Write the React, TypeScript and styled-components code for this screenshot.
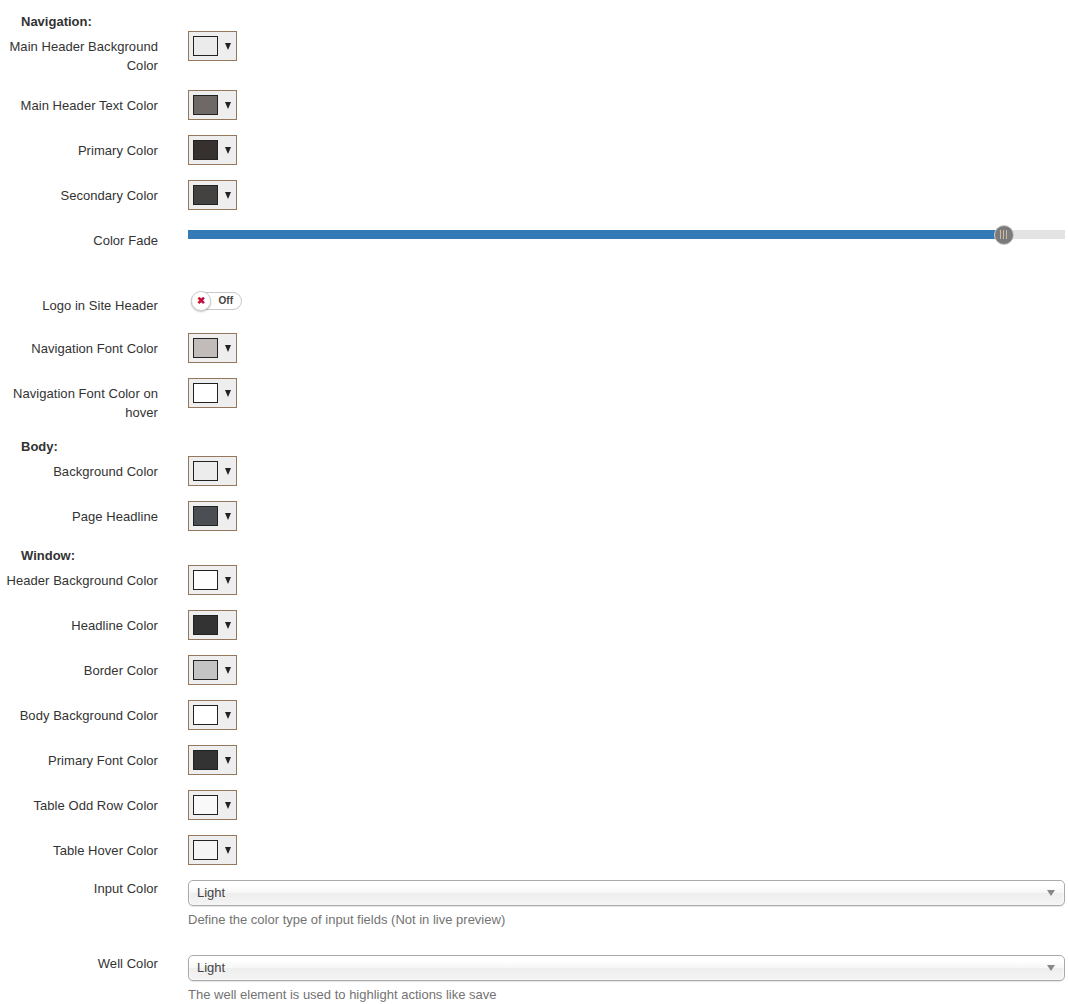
import React from "react";
import styled, { createGlobalStyle } from "styled-components";

const GlobalStyle = createGlobalStyle`
  body {
    margin: 0;
    background: #fff;
    font-family: "Liberation Sans", Arial, sans-serif;
    font-size: 13px;
    line-height: 1.428571;
    color: #333;
  }
`;

const Form = styled.div`
  padding: 12px 3px 0 0;
  width: 1065px;
`;

const SectionTitle = styled.div`
  padding: 1px 0 0 21px;
  font-weight: bold;
  height: 18px;
`;

const Row = styled.div`
  display: grid;
  grid-template-columns: 158px 1fr;
  column-gap: 30px;
  margin-bottom: 15px;
`;

const Label = styled.label<{ $top?: number }>`
  text-align: right;
  letter-spacing: 0.05px;
  padding-top: ${(p) => (p.$top ?? 7)}px;
`;

const PickerButton = styled.div`
  border: 1px solid #95785c;
  background: #eee;
  display: flex;
  align-items: flex-start;
  padding: 4px 0 0 4px;
  box-sizing: content-box;
  width: 43px;
  height: 24px;
`;

const Swatch = styled.span<{ $color: string }>`
  width: 23px;
  height: 18px;
  border: 1px solid #222;
  background: ${(p) => p.$color};
`;

const Caret = styled.span`
  margin-left: 7px;
  margin-top: 7px;
  width: 0;
  height: 0;
  border-left: 3.5px solid transparent;
  border-right: 3.5px solid transparent;
  border-top: 7px solid #222;
`;

const ColorPicker = ({ color }: { color: string }) => (
  <PickerButton>
    <Swatch $color={color} />
    <Caret />
  </PickerButton>
);

const SliderWrap = styled.div`
  height: 50px;
  padding-top: 5px;
  box-sizing: border-box;
`;

const Track = styled.div`
  position: relative;
  height: 9px;
  background: #e3e3e3;
`;

const Fill = styled.div`
  height: 100%;
  background: #337ab7;
`;

const Handle = styled.div`
  position: absolute;
  top: 50%;
  width: 18px;
  height: 18px;
  margin: -10px 0 0 -10px;
  border-radius: 50%;
  background: #7b7b7b;
  border: 1px solid #cfcfcf;
  display: flex;
  align-items: center;
  justify-content: center;
  gap: 2px;
  span {
    width: 1px;
    height: 9px;
    background: #c9b9a6;
  }
`;

const Slider = ({ value }: { value: number }) => (
  <SliderWrap>
    <Track>
      <Fill style={{ width: `${value}%` }} />
      <Handle style={{ left: `${value}%` }}>
        <span />
        <span />
        <span />
      </Handle>
    </Track>
  </SliderWrap>
);

const ToggleWrap = styled.div`
  margin: 2px 0 8px 3px;
  width: 51px;
  height: 18px;
  border: 1px solid #c8c8c8;
  border-radius: 9px;
  background: #fff;
  position: relative;
  display: flex;
  align-items: center;
  justify-content: flex-end;
  padding-right: 8px;
  box-sizing: border-box;
`;

const Knob = styled.div`
  position: absolute;
  left: -1px;
  top: -2px;
  width: 20px;
  height: 20px;
  border-radius: 50%;
  background: #fff;
  border: 1px solid #d0d0d0;
  box-sizing: border-box;
  box-shadow: 0 1px 2px rgba(0, 0, 0, 0.25);
  display: flex;
  align-items: center;
  justify-content: center;
  color: #c0103a;
  font-size: 10px;
  font-weight: bold;
  line-height: 1;
`;

const ToggleText = styled.span`
  font-size: 10px;
  font-weight: bold;
  color: #444;
`;

const Toggle = () => (
  <ToggleWrap>
    <Knob>✖</Knob>
    <ToggleText>Off</ToggleText>
  </ToggleWrap>
);

const Select = styled.div`
  height: 26px;
  box-sizing: border-box;
  border: 1px solid #aaa;
  border-radius: 5px;
  background: linear-gradient(#fff 20%, #f6f6f6 50%, #eee 52%, #f4f4f4 100%);
  box-shadow: 0 0 3px #fff inset, 0 1px 1px rgba(0, 0, 0, 0.1);
  padding: 0 8px;
  display: flex;
  align-items: center;
  justify-content: space-between;
  color: #444;
`;

const SelectArrow = styled.span`
  width: 0;
  height: 0;
  border-left: 4px solid transparent;
  border-right: 4px solid transparent;
  border-top: 6px solid #888;
  margin-right: 1px;
`;

const Help = styled.div`
  margin: 5px 0 10px;
  color: #737373;
`;

const ColorRow = ({ label, color }: { label: string; color: string }) => (
  <Row>
    <Label>{label}</Label>
    <ColorPicker color={color} />
  </Row>
);

const SelectRow = ({ label, help }: { label: string; help: string }) => (
  <Row>
    <Label $top={0}>{label}</Label>
    <div>
      <Select>
        <span>Light</span>
        <SelectArrow />
      </Select>
      <Help>{help}</Help>
    </div>
  </Row>
);

export default function App() {
  return (
    <>
      <GlobalStyle />
      <Form>
        <SectionTitle>Navigation:</SectionTitle>
        <ColorRow label="Main Header Background Color" color="#ebebeb" />
        <ColorRow label="Main Header Text Color" color="#6e6967" />
        <ColorRow label="Primary Color" color="#36312f" />
        <ColorRow label="Secondary Color" color="#444240" />
        <Row>
          <Label>Color Fade</Label>
          <Slider value={93} />
        </Row>
        <Row>
          <Label>Logo in Site Header</Label>
          <Toggle />
        </Row>
        <ColorRow label="Navigation Font Color" color="#c1bcb9" />
        <ColorRow label="Navigation Font Color on hover" color="#ffffff" />
        <SectionTitle>Body:</SectionTitle>
        <ColorRow label="Background Color" color="#ececec" />
        <ColorRow label="Page Headline" color="#4b4e52" />
        <SectionTitle>Window:</SectionTitle>
        <ColorRow label="Header Background Color" color="#ffffff" />
        <ColorRow label="Headline Color" color="#333333" />
        <ColorRow label="Border Color" color="#c4c4c4" />
        <ColorRow label="Body Background Color" color="#ffffff" />
        <ColorRow label="Primary Font Color" color="#333333" />
        <ColorRow label="Table Odd Row Color" color="#f9f9f9" />
        <ColorRow label="Table Hover Color" color="#f5f5f5" />
        <SelectRow
          label="Input Color"
          help="Define the color type of input fields (Not in live preview)"
        />
        <SelectRow
          label="Well Color"
          help="The well element is used to highlight actions like save"
        />
      </Form>
    </>
  );
}
